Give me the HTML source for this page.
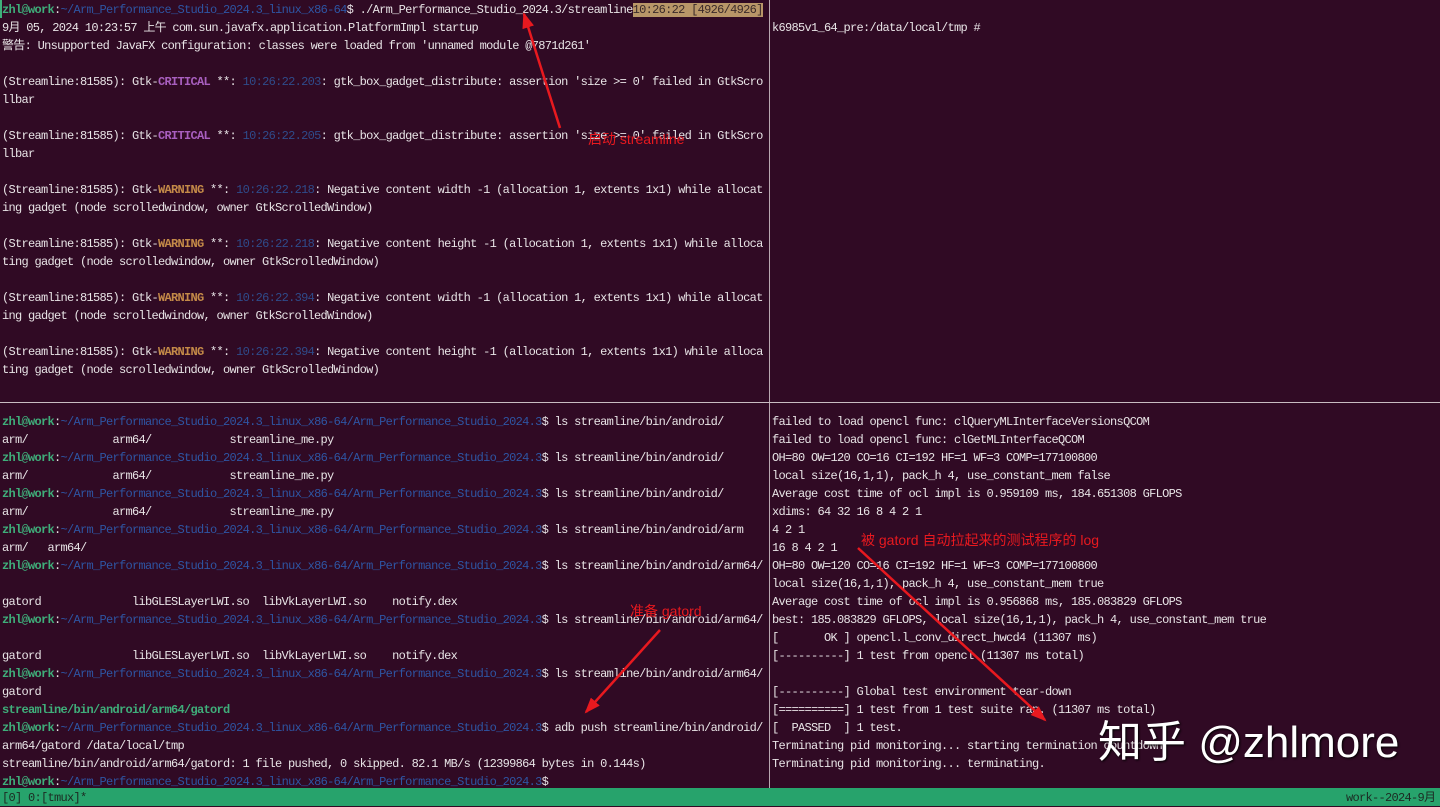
<!DOCTYPE html>
<html><head><meta charset="utf-8"><style>
html,body{margin:0;padding:0;width:1440px;height:806px;overflow:hidden;background:#300a24;}
.p{position:absolute;margin:0;font-family:"Liberation Mono","Noto Sans CJK SC",monospace;font-size:12px;letter-spacing:-0.7px;line-height:18px;color:#e8e4e6;white-space:pre;}
.g{color:#3fae7a;font-weight:bold}
.b{color:#2e55a3}
.c{color:#a85fbf;font-weight:bold}
.w{color:#c48a48;font-weight:bold}
.t{color:#2f4b8a}
.hl{background:#b89668;color:#3a2a2a}
.gr{color:#3fae7a;font-weight:bold}
</style></head><body>
<div style="position:absolute;left:769px;top:0;width:1px;height:788px;background:#b8a8b0"></div>
<div style="position:absolute;left:0;top:402px;width:1440px;height:1px;background:#c8bcc2"></div>
<div style="position:absolute;left:0;top:0;width:2px;height:18px;background:#3fae7a"></div>
<pre class="p" style="left:2px;top:1px"><span class="g">zhl@work</span>:<span class="b">~/Arm_Performance_Studio_2024.3_linux_x86-64</span>$ ./Arm_Performance_Studio_2024.3/streamline<span class="hl">10:26:22 [4926/4926]</span>
9月 05, 2024 10:23:57 上午 com.sun.javafx.application.PlatformImpl startup
警告: Unsupported JavaFX configuration: classes were loaded from 'unnamed module @7871d261'

(Streamline:81585): Gtk-<span class="c">CRITICAL</span> **: <span class="t">10:26:22.203</span>: gtk_box_gadget_distribute: assertion 'size >= 0' failed in GtkScro
llbar

(Streamline:81585): Gtk-<span class="c">CRITICAL</span> **: <span class="t">10:26:22.205</span>: gtk_box_gadget_distribute: assertion 'size >= 0' failed in GtkScro
llbar

(Streamline:81585): Gtk-<span class="w">WARNING</span> **: <span class="t">10:26:22.218</span>: Negative content width -1 (allocation 1, extents 1x1) while allocat
ing gadget (node scrolledwindow, owner GtkScrolledWindow)

(Streamline:81585): Gtk-<span class="w">WARNING</span> **: <span class="t">10:26:22.218</span>: Negative content height -1 (allocation 1, extents 1x1) while alloca
ting gadget (node scrolledwindow, owner GtkScrolledWindow)

(Streamline:81585): Gtk-<span class="w">WARNING</span> **: <span class="t">10:26:22.394</span>: Negative content width -1 (allocation 1, extents 1x1) while allocat
ing gadget (node scrolledwindow, owner GtkScrolledWindow)

(Streamline:81585): Gtk-<span class="w">WARNING</span> **: <span class="t">10:26:22.394</span>: Negative content height -1 (allocation 1, extents 1x1) while alloca
ting gadget (node scrolledwindow, owner GtkScrolledWindow)</pre>
<pre class="p" style="left:772px;top:19px">k6985v1_64_pre:/data/local/tmp #</pre>
<pre class="p" style="left:2px;top:413px"><span class="g">zhl@work</span>:<span class="b">~/Arm_Performance_Studio_2024.3_linux_x86-64/Arm_Performance_Studio_2024.3</span>$ ls streamline/bin/android/
arm/             arm64/            streamline_me.py
<span class="g">zhl@work</span>:<span class="b">~/Arm_Performance_Studio_2024.3_linux_x86-64/Arm_Performance_Studio_2024.3</span>$ ls streamline/bin/android/
arm/             arm64/            streamline_me.py
<span class="g">zhl@work</span>:<span class="b">~/Arm_Performance_Studio_2024.3_linux_x86-64/Arm_Performance_Studio_2024.3</span>$ ls streamline/bin/android/
arm/             arm64/            streamline_me.py
<span class="g">zhl@work</span>:<span class="b">~/Arm_Performance_Studio_2024.3_linux_x86-64/Arm_Performance_Studio_2024.3</span>$ ls streamline/bin/android/arm
arm/   arm64/
<span class="g">zhl@work</span>:<span class="b">~/Arm_Performance_Studio_2024.3_linux_x86-64/Arm_Performance_Studio_2024.3</span>$ ls streamline/bin/android/arm64/

gatord              libGLESLayerLWI.so  libVkLayerLWI.so    notify.dex
<span class="g">zhl@work</span>:<span class="b">~/Arm_Performance_Studio_2024.3_linux_x86-64/Arm_Performance_Studio_2024.3</span>$ ls streamline/bin/android/arm64/

gatord              libGLESLayerLWI.so  libVkLayerLWI.so    notify.dex
<span class="g">zhl@work</span>:<span class="b">~/Arm_Performance_Studio_2024.3_linux_x86-64/Arm_Performance_Studio_2024.3</span>$ ls streamline/bin/android/arm64/
gatord
<span class="gr">streamline/bin/android/arm64/gatord</span>
<span class="g">zhl@work</span>:<span class="b">~/Arm_Performance_Studio_2024.3_linux_x86-64/Arm_Performance_Studio_2024.3</span>$ adb push streamline/bin/android/
arm64/gatord /data/local/tmp
streamline/bin/android/arm64/gatord: 1 file pushed, 0 skipped. 82.1 MB/s (12399864 bytes in 0.144s)
<span class="g">zhl@work</span>:<span class="b">~/Arm_Performance_Studio_2024.3_linux_x86-64/Arm_Performance_Studio_2024.3</span>$</pre>
<pre class="p" style="left:772px;top:413px">failed to load opencl func: clQueryMLInterfaceVersionsQCOM
failed to load opencl func: clGetMLInterfaceQCOM
OH=80 OW=120 CO=16 CI=192 HF=1 WF=3 COMP=177100800
local size(16,1,1), pack_h 4, use_constant_mem false
Average cost time of ocl impl is 0.959109 ms, 184.651308 GFLOPS
xdims: 64 32 16 8 4 2 1
4 2 1
16 8 4 2 1
OH=80 OW=120 CO=16 CI=192 HF=1 WF=3 COMP=177100800
local size(16,1,1), pack_h 4, use_constant_mem true
Average cost time of ocl impl is 0.956868 ms, 185.083829 GFLOPS
best: 185.083829 GFLOPS, local size(16,1,1), pack_h 4, use_constant_mem true
[       OK ] opencl.l_conv_direct_hwcd4 (11307 ms)
[----------] 1 test from opencl (11307 ms total)

[----------] Global test environment tear-down
[==========] 1 test from 1 test suite ran. (11307 ms total)
[  PASSED  ] 1 test.
Terminating pid monitoring... starting termination countdown
Terminating pid monitoring... terminating.</pre>
<div style="position:absolute;left:0;top:788px;width:1440px;height:18px;background:#27a36c"></div>
<pre class="p" style="left:2px;top:789px;color:#1c2a22">[0] 0:[tmux]*</pre>
<pre class="p" style="left:1346px;top:789px;color:#1c2a22">work--2024-9月</pre>
<svg style="position:absolute;left:0;top:0" width="1440" height="806">
<defs><marker id="m" markerWidth="16" markerHeight="12" refX="14" refY="6" orient="auto" markerUnits="userSpaceOnUse"><path d="M0,0 L16,6 L0,12 Z" fill="#e8191f"/></marker></defs>
<line x1="560" y1="128" x2="524" y2="14" stroke="#e8191f" stroke-width="2.5" marker-end="url(#m)"/>
<line x1="660" y1="630" x2="586" y2="712" stroke="#e8191f" stroke-width="2.5" marker-end="url(#m)"/>
<line x1="858" y1="548" x2="1045" y2="720" stroke="#e8191f" stroke-width="2.5" marker-end="url(#m)"/>
</svg>
<div style="position:absolute;left:588px;top:129px;font-family:'Liberation Sans','Noto Sans CJK SC',sans-serif;font-size:14px;color:#e8191f">启动 streamline</div>
<div style="position:absolute;left:630px;top:601px;font-family:'Liberation Sans','Noto Sans CJK SC',sans-serif;font-size:14px;color:#e8191f">准备 gatord</div>
<div style="position:absolute;left:861px;top:530px;font-family:'Liberation Sans','Noto Sans CJK SC',sans-serif;font-size:14px;color:#e8191f">被 gatord 自动拉起来的测试程序的 log</div>
<div style="position:absolute;left:1098px;top:716px;font-family:'Liberation Sans','Noto Sans CJK SC',sans-serif;font-size:44px;line-height:54px;color:#fff;text-shadow:1px 1px 2px #000">知乎 @zhlmore</div>
</body></html>
